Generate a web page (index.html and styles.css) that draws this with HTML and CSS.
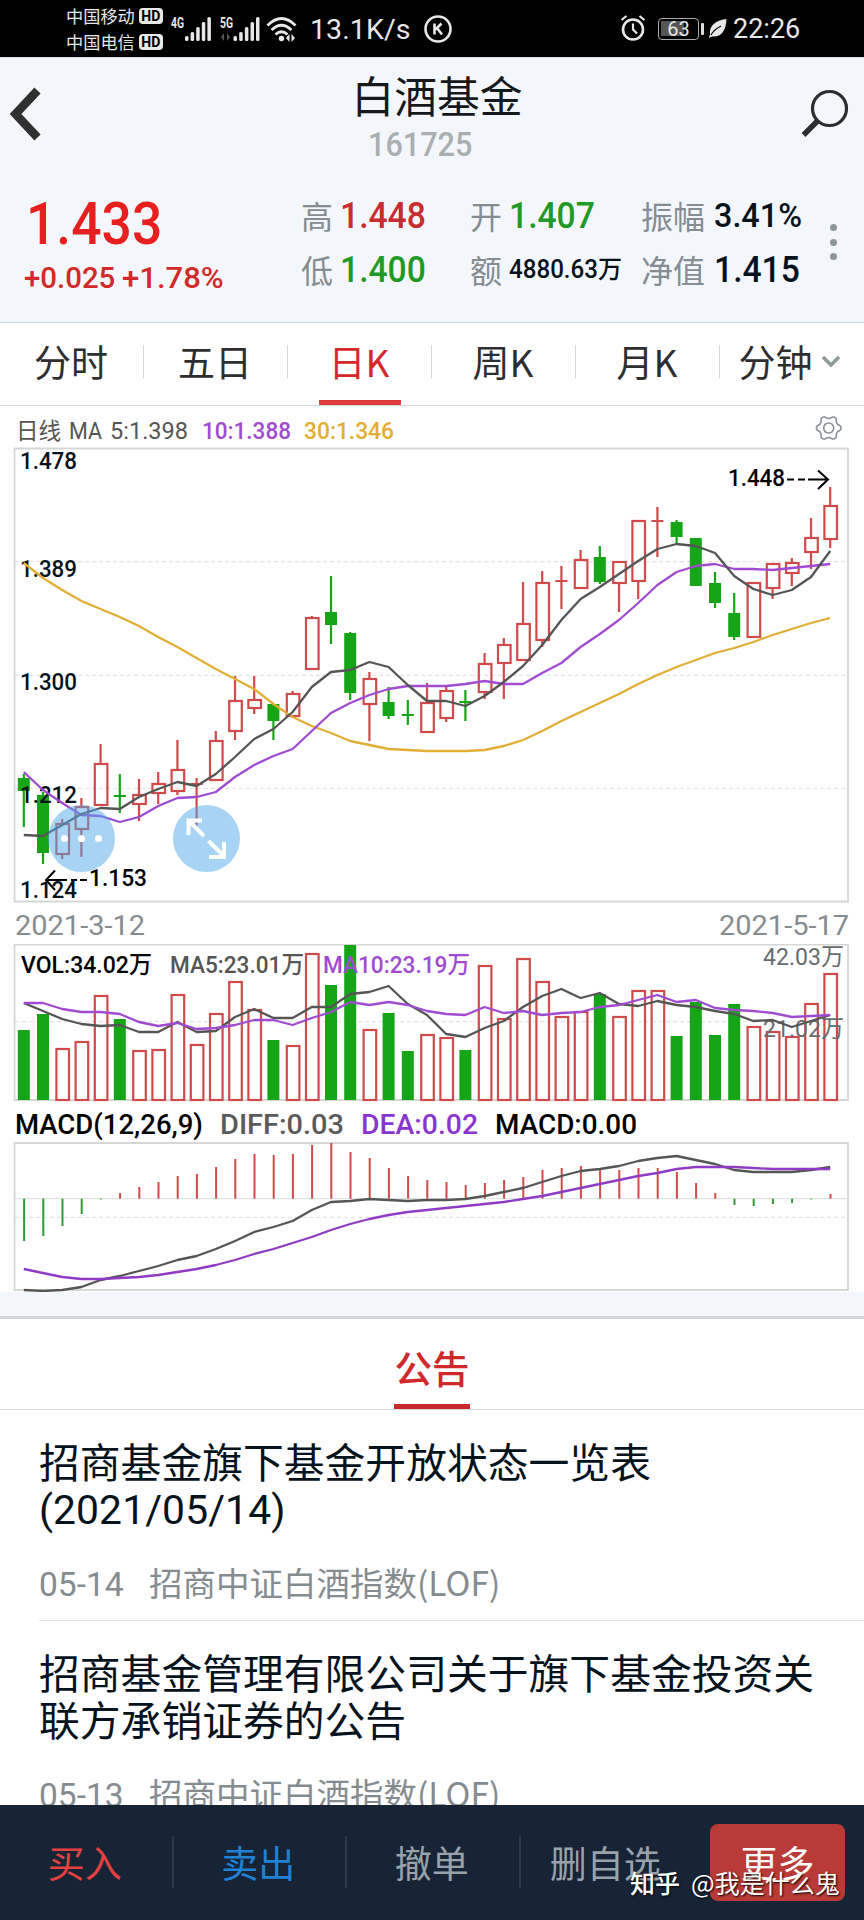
FILE: index.html
```html
<!DOCTYPE html>
<html lang="zh-CN">
<head>
<meta charset="utf-8">
<title>白酒基金 161725</title>
<link rel="stylesheet" href="styles.css">
</head>
<body>
<div class="phone">
  <div class="status">
    <div class="carriers">
      <div class="carrier">中国移动<b class="hd">HD</b></div>
      <div class="carrier">中国电信<b class="hd">HD</b></div>
    </div>
    <svg class="radio" width="130" height="57" viewBox="168 0 130 57" fill="#e8e8e8">
      <text x="171" y="28" class="gen" textLength="13" lengthAdjust="spacingAndGlyphs">4G</text>
      <rect x="185" y="36" width="3.5" height="5" rx="1.5"/><rect x="190.6" y="32" width="3.5" height="9" rx="1.5"/><rect x="196.200" y="27" width="3.500" height="14" rx="1.5"/><rect x="201.800" y="22" width="3.500" height="19" rx="1.5"/><rect x="207.400" y="17" width="3.500" height="24" rx="1.5"/>
      <text x="220" y="28" class="gen" textLength="13" lengthAdjust="spacingAndGlyphs">5G</text>
      <path d="M224 41V33l-3 4zM227 33v8l3-4z" fill="#555"/>
      <rect x="233.500" y="36" width="3.500" height="5" rx="1.5"/><rect x="239.200" y="32" width="3.500" height="9" rx="1.5"/><rect x="244.900" y="27" width="3.500" height="14" rx="1.500"/><rect x="250.500" y="22" width="3.500" height="19" rx="1.500"/><rect x="256" y="17" width="3.500" height="24" rx="1.500"/>
      <g fill="none" stroke="#e8e8e8" stroke-width="2.800"><path d="M267.500 25.500Q281.500 11.500 295.500 25.500"/><path d="M271.500 30Q281.500 20.500 291.500 30"/><path d="M275.500 34.500Q281.500 29 287.500 34.500"/></g>
      <circle cx="281.500" cy="38.500" r="2.700"/><path d="M289.500 34v8l-3.500-4zM291.500 34v8l3.500-4z"/>
    </svg>
    <span class="speed">13.1K/s</span>
    <svg class="kmark" width="28" height="28" viewBox="0 0 28 28" fill="none" stroke="#e8e8e8" stroke-width="2.600"><circle cx="14" cy="14" r="12.500"/><path d="M10.500 8.500v11M17.500 8.500l-6 6M13 13l5 6.500"/></svg>
    <svg class="alarm" width="26" height="28" viewBox="0 0 26 28" fill="none" stroke="#e8e8e8"><circle cx="13" cy="15.500" r="10" stroke-width="2.600"/><path d="M13 9.500v6l4 4" stroke-width="2.200"/><path d="M1.500 6l5-4M24.500 6l-5-4" stroke-width="2.200"/></svg>
    <span class="battery"><i class="charge"></i><span class="pct">63</span></span><i class="nub"></i>
    <svg class="leaf" width="18" height="20" viewBox="0 0 18 20"><path d="M17.500 0C8 1 0 6 1 15L0 19l3-1.500C12 18.500 17 12 17.500 0z" fill="#e8e8e8"/><path d="M2 16Q5 10.500 12 7" stroke="#000" stroke-width="1.200" fill="none"/></svg>
    <span class="clock">22:26</span>
  </div>

  <header class="head">
    <svg class="back" width="34" height="56" viewBox="0 0 34 56"><path d="M28.500 4.500L6.500 28L28.500 51.500" fill="none" stroke="#303030" stroke-width="8.500"/></svg>
    <div class="names"><h1 class="title">白酒基金</h1><div class="code">161725</div></div>
    <svg class="search" width="50" height="50" viewBox="0 0 50 50" fill="none" stroke="#2d2d2f"><circle cx="30.500" cy="20.500" r="17" stroke-width="3.200"/><path d="M19 32.500L4.500 47" stroke-width="5.500"/></svg>
  </header>

  <section class="quote">
    <div class="last">
      <div class="price">1.433</div>
      <div class="change"><span class="delta">+0.025</span><span class="rate">+1.78%</span></div>
    </div>
    <dl class="stats">
      <div class="stat"><dt>高</dt><dd class="up">1.448</dd></div>
      <div class="stat"><dt>开</dt><dd class="down">1.407</dd></div>
      <div class="stat"><dt>振幅</dt><dd class="mid">3.41%</dd></div>
      <div class="stat"><dt>低</dt><dd class="down">1.400</dd></div>
      <div class="stat"><dt>额</dt><dd class="small">4880.63万</dd></div>
      <div class="stat"><dt>净值</dt><dd>1.415</dd></div>
    </dl>
    <div class="more"><i></i><i></i><i></i></div>
  </section>

  <nav class="tabs">
    <a class="tab">分时</a><a class="tab">五日</a><a class="tab active">日K</a><a class="tab">周K</a><a class="tab">月K</a>
    <a class="tab">分钟<svg width="20" height="14" viewBox="0 0 20 14" fill="none" stroke="#8f9a98" stroke-width="3.500"><path d="M2 2l8 8l8-8"/></svg></a>
  </nav>

  <main class="charts">
    <svg id="kline" class="chart" width="864" height="538" viewBox="0 406 864 538"></svg>
    <svg id="volume" class="chart" width="864" height="158" viewBox="0 944 864 158"></svg>
    <svg id="macd" class="chart" width="864" height="190" viewBox="0 1102 864 190"></svg>
    <button class="float dots"><i></i><i></i><i></i></button>
    <button class="float expand"><svg width="67" height="67" viewBox="0 0 67 67" fill="none" stroke="#fff" stroke-width="4"><path d="M31 31L16 16M15.500 30V15.500H29M35.500 36L51 51M51 37V52H36"/></svg></button>
  </main>
  <div class="band"></div>

  <section class="news">
    <div class="newshead"><span class="newstab">公告</span></div>
    <article class="item"><h2>招商基金旗下基金开放状态一览表<br><span class="latin">(2021/05/14)</span></h2><p><span class="date">05-14</span>招商中证白酒指数(LOF)</p></article>
    <article class="item"><h2>招商基金管理有限公司关于旗下基金投资关联方承销证券的公告</h2><p><span class="date">05-13</span>招商中证白酒指数(LOF)</p></article>
  </section>

  <footer class="bar">
    <a class="act buy">买入</a><a class="act sell">卖出</a><a class="act">撤单</a><a class="act">删自选</a>
    <a class="morebtn">更多</a>
    <div class="mark"><b>知乎</b><span>@我是什么鬼</span></div>
  </footer>
</div>
<script src="charts.js"></script>
</body>
</html>
```
FILE: styles.css
```css
* { box-sizing: border-box; }
body { margin: 0; background: #fff; font-family: Roboto, "Noto Sans CJK SC", sans-serif; }
h1, h2, p, dl, dd { margin: 0; font-weight: 400; }
i { font-style: normal; display: block; }
.phone { width: 864px; height: 1920px; overflow: hidden; position: relative; display: flex; flex-direction: column; }

.status { height: 57px; flex: none; background: #000; color: #e8e8e8; display: flex; align-items: flex-start; }
.carriers { margin: 3px 0 0 66px; width: 98px; }
.carrier { height: 26px; line-height: 24px; font-size: 17.2px; display: flex; align-items: center; gap: 4px; white-space: nowrap; font-family: "Noto Sans CJK SC", sans-serif; }
.hd { width: 24px; height: 16px; border-radius: 4px; background: #e8e8e8; color: #000; font: 700 14px/16px Roboto, sans-serif; text-align: center; }
.radio { margin-left: 4px; flex: none; }
.gen { font: 700 14px Roboto, sans-serif; }
.speed { margin: 13px 0 0 12px; width: 102px; font-size: 28.5px; line-height: 34px; letter-spacing: .1px; }
.kmark { margin: 15px 0 0 12px; }
.alarm { margin: 14px 0 0 168px; }
.battery { margin: 18px 0 0 12px; width: 41px; height: 22px; border: 1.5px solid #aaa; border-radius: 4px; position: relative; flex: none; }
.charge { width: 23px; height: 15px; margin: 2px; background: #555; }
.pct { position: absolute; inset: 0; text-align: center; font-size: 20px; line-height: 20px; }
.nub { width: 3px; height: 12px; background: #ddd; margin: 23px 0 0 2px; border-radius: 1px; }
.leaf { margin: 19px 0 0 5px; }
.clock { margin: 13px 0 0 6px; font-size: 27px; line-height: 33px; }

.head { height: 113px; flex: none; background: #f3f7fb; display: flex; align-items: flex-start; justify-content: space-between; border-top: 1px solid #dfe3e6; }
.back { margin: 28px 0 0 9px; }
.names { padding-left: 32px; }
.title { font: 400 42.800px/56px "Noto Sans CJK SC", sans-serif; color: #16191c; margin-top: 8px; }
.code { font-size: 34px; line-height: 38px; color: #a9aeb1; font-weight: 500; margin: 3px 0 0 17px; transform: scaleX(.9); transform-origin: 0 50%; }
.search { margin: 30px 15px 0 0; }

.quote { height: 153px; flex: none; background: #f3f7fb; border-bottom: 1px solid #cfdae2; display: flex; }
.last { width: 301px; padding-left: 24px; font-weight: 500; }
.price { font-size: 60px; line-height: 70px; margin: 19px 0 0 2px; color: #e61f1f; transform: scaleX(.89); transform-origin: 0 0; }
.change { display: flex; font-size: 30px; line-height: 34px; color: #d22a2a; margin-top: 2px; }
.delta { width: 98px; transform: scaleX(.98); transform-origin: 0 0; }
.rate { transform: scaleX(1.035); transform-origin: 0 0; }
.stats { display: grid; grid-template-columns: 169px 171px 176px; grid-template-rows: 54px 54px; padding-top: 19px; }
.stat { display: flex; align-items: center; gap: 7px; height: 54px; color: #06121c; }
.stat:nth-child(3n) { gap: 9px; }
.stat dt { font: 400 32px/52px "Noto Sans CJK SC", sans-serif; color: #858c92; padding-bottom: 2px; }
.stat dd { font-size: 36px; font-weight: 500; line-height: 54px; transform: scaleX(.935); transform-origin: 0 50%; white-space: nowrap; }
.stat dd.mid { font-size: 33px; transform: scaleX(.98); }
.stat dd.small { font-size: 25px; transform: scaleX(.965); }
.stat .up { color: #c92c31; }
.stat .down { color: #209a24; }
.more { padding: 54px 0 0 13px; display: flex; flex-direction: column; gap: 7.500px; }
.more i { width: 7px; height: 7px; border-radius: 50%; background: #8c9599; }

.tabs { height: 83px; flex: none; display: grid; grid-template-columns: repeat(6, 144px); border-bottom: 1px solid #d2d8da; }
.tab { position: relative; font-size: 37px; line-height: 76px; text-align: center; color: #2e2e30; padding-right: 2px; font-family: "Noto Sans CJK SC", sans-serif; }
.tab + .tab::before { content: ""; position: absolute; left: -1px; top: 22px; width: 1px; height: 33px; background: #d5d7d8; }
.tab.active { color: #d5282b; }
.tab.active::after { content: ""; position: absolute; left: 31px; bottom: 0; width: 82px; height: 5px; background: #e03c3e; }
.tab:last-child { padding-right: 5px; }
.tab svg { margin-left: 8px; vertical-align: 8px; }

.charts { position: relative; height: 886px; flex: none; }
.chart { display: block; font-family: Roboto, "Noto Sans CJK SC", sans-serif; }
.float { position: absolute; width: 67px; height: 67px; border: 0; border-radius: 50%; padding: 0; background: rgba(80, 170, 235, .5); }
.dots { left: 48px; top: 399px; display: flex; justify-content: center; align-items: center; gap: 10px; }
.dots i { width: 7px; height: 7px; border-radius: 50%; background: #fff; }
.expand { left: 173px; top: 399px; }
.expand svg { display: block; }
.band { height: 27px; flex: none; background: #f3f7f9; border-bottom: 3px solid #d2d5d5; }

.news { flex: none; font-family: "Noto Sans CJK SC", sans-serif; }
.newshead { height: 91px; border-bottom: 1px solid #d8dbdb; display: flex; justify-content: center; }
.newstab { width: 76px; height: 90px; border-bottom: 5px solid #c5292b; color: #d0292c; font-size: 37.500px; font-weight: 500; line-height: 95px; text-align: center; }
.item { margin-left: 39px; height: 211px; padding-top: 27px; border-bottom: 1px solid #e3e5e6; }
.item h2 { font-size: 40.800px; line-height: 47px; color: #06121c; width: 800px; }
.latin { font-family: Roboto, sans-serif; letter-spacing: .1px; position: relative; top: -1px; }
.item p { font-size: 33.500px; line-height: 48px; margin-top: 23px; color: #858c90; }
.item + .item p { margin-top: 27px; }
.date { display: inline-block; width: 110px; font-family: Roboto, sans-serif; }

.bar { position: absolute; left: 0; bottom: 0; width: 864px; height: 115px; background: #172436; display: flex; font-family: "Noto Sans CJK SC", sans-serif; }
.act { position: relative; width: 173.500px; padding-right: 4px; font-size: 37px; line-height: 114px; text-align: center; color: #97a2ab; }
.act:not(:nth-child(4))::after { content: ""; position: absolute; right: 0; top: 31px; width: 2px; height: 52px; background: #2b394a; }
.buy { color: #e3413f; }
.sell { color: #1f82d5; }
.morebtn { margin: 19px 0 0 16px; width: 135px; height: 77px; border-radius: 8px; background: #b93a36; color: #fff; font-size: 37px; line-height: 76px; text-align: center; }
.mark { position: absolute; left: 630px; top: 58px; display: flex; gap: 11px; font-size: 25px; line-height: 38px; color: #fff; text-shadow: 1px 1px 2px #000; white-space: nowrap; }
.mark b { font-weight: 500; }
```
FILE: charts.js
```javascript
const RED = '#cf4a49', GREEN = '#16a516', DARK = '#555', PURPLE = '#a04bd2', GOLD = '#e3ae35', GRID = '#d5d7d7';
const x = i => 23.8 + 19.2 * i;
const line = (ys, color) => `<polyline fill="none" stroke="${color}" stroke-width="2.3" stroke-linejoin="round" points="${ys.map((y, i) => x(i).toFixed(1) + ',' + y).join(' ')}"/>`;
const label = (s, x0, x1, y, size, color, weight = 500) => `<text x="${x0}" y="${y}" font-size="${size}" fill="${color}" font-weight="${weight}" textLength="${x1 - x0}" lengthAdjust="spacingAndGlyphs">${s}</text>`;
const frame = (top, bottom) => `<path d="M14.500 ${top}V${bottom}H848V${top}Z" fill="none" stroke="${GRID}" stroke-width="1.800"/>`;
const rule = (y, dash) => `<path d="M15 ${y}H848" stroke="#dcdede" ${dash ? 'stroke-dasharray="4 3"' : ''}/>`;

// colour, high, body top, body bottom, low
const candles = [
  ['g',774,778,791,827],['g',792,795,853,864],['r',819,824,854,859],['r',798,807,829,857],['r',744,764,805,805],
  ['g',774,796,796,813],['r',779,795,804,821],['r',772,784,793,804],['r',740,770,791,795],['r',778,784,784,826],
  ['r',731,741,780,780],['r',676,701,731,740],['r',676,700,708,714],['g',704,704,721,740],['r',691,694,716,718],
  ['r',616,618,669,669],['g',576,612,625,644],['g',632,633,693,700],['r',672,679,704,741],['g',687,702,716,719],
  ['g',700,715,715,725],['r',683,703,732,732],['r',687,691,718,722],['g',690,702,702,721],['r',653,664,692,699],
  ['r',638,645,663,699],['r',582,624,660,660],['r',571,583,640,647],['r',566,581,581,609],['r',550,560,588,588],
  ['g',546,557,582,584],['r',562,562,583,612],['r',521,521,581,599],['r',507,521,521,557],['g',520,522,537,544],
  ['g',538,538,586,586],['g',572,583,603,608],['g',593,613,637,640],['r',583,583,637,637],['r',564,564,588,599],
  ['r',558,563,573,586],['r',518,538,552,569],['r',487,506,539,548]
];
const ma5 = [835,836,825,814,808,809,797,789,782,786,774,757,739,729,712,687,672,670,662,667,685,701,701,706,696,682,666,645,620,599,587,574,561,549,544,546,553,576,589,595,590,577,551];
const ma10 = [772,790,803,815,816,822,817,806,798,797,792,777,765,756,749,731,713,703,695,689,686,686,686,684,681,684,684,673,663,647,634,620,603,585,572,566,564,569,569,570,568,566,564];
const ma30 = [563,578,590,601,609,617,626,637,647,658,669,679,689,704,717,726,733,741,745,749,750,751,751,751,750,746,740,731,721,712,703,694,684,675,667,660,653,648,642,635,629,623,618];
const vol = [1030,1014,1049,1042,996,1019,1051,1050,995,1045,1014,982,1010,1040,1046,954,985,945,1030,1013,1051,1035,1038,1050,966,1019,959,982,1017,1012,994,1017,991,991,1036,1002,1035,1004,1027,1032,1037,1004,974];
const vma5 = [1003,1011,1019,1024,1026,1025,1032,1032,1022,1032,1031,1017,1009,1018,1018,1007,1007,994,992,986,1004,1015,1034,1037,1028,1021,1007,996,989,998,993,1004,1006,1001,1005,1007,1011,1014,1021,1020,1027,1021,1015];
const vma10 = [1003,1003,1009,1012,1012,1014,1022,1026,1023,1029,1028,1025,1020,1020,1025,1018,1012,1002,1005,1002,1005,1011,1014,1015,1007,1013,1011,1015,1013,1012,1007,1005,1000,995,1002,1000,1008,1010,1011,1013,1017,1016,1015];
const hist = [1241,1236,1226,1214,1199.5,1193,1187,1182,1176,1174,1167,1159,1154,1155,1154,1145,1143,1152,1158,1168,1176,1180,1182,1185,1183,1180,1177,1170,1168,1166,1169,1170,1168,1168,1172,1183,1193,1205,1206,1204,1203,1199.5,1194];
const diff = [1290,1291,1290,1287,1280,1276,1271,1266,1260,1256,1249,1241,1232,1227,1221,1210,1202,1201,1199,1200,1201,1200,1200,1199,1196,1192,1188,1182,1176,1171,1169,1166,1161,1158,1156,1160,1164,1170,1172,1172,1172,1170,1167];
const dea = [1269,1273,1277,1279,1279,1278,1277,1275,1272,1269,1265,1260,1254,1249,1243,1237,1230,1224,1219,1215,1212,1210,1208,1206,1204,1202,1199,1196,1192,1188,1184,1180,1176,1173,1169,1167,1167,1167,1168,1169,1169,1169,1169];

const body = (i, color, top, bottom) => color === 'g'
  ? `<rect x="${x(i) - 6}" y="${top}" width="12" height="${bottom - top}" fill="${GREEN}"/>`
  : `<rect x="${x(i) - 5.8}" y="${top}" width="12.6" height="${bottom - top}" fill="none" stroke="${RED}" stroke-width="2.2"/>`;

function candle([c, high, top, bottom, low], i) {
  const col = c === 'g' ? GREEN : RED, cx = x(i);
  if (top === bottom) return `<path d="M${cx} ${high}V${low}M${cx - 6} ${top}H${cx + 6}" stroke="${col}" stroke-width="2.2"/>`;
  return `<path d="M${cx} ${high}V${top}M${cx} ${bottom}V${low}" stroke="${col}" stroke-width="2.2"/>` + body(i, c, top, bottom);
}

function gear(cx, cy) {
  let d = '';
  for (let k = 0; k < 48; k++) {
    const a = k * Math.PI / 24, r = 10.9 + 1.4 * Math.tanh(2 * Math.cos(6 * a));
    d += (k ? 'L' : 'M') + (cx + r * Math.cos(a)).toFixed(1) + ' ' + (cy + r * Math.sin(a)).toFixed(1);
  }
  return `<g fill="none" stroke="#8c9599" stroke-width="1.700"><path d="${d}Z"/><circle cx="${cx}" cy="${cy}" r="5"/></g>`;
}

document.getElementById('kline').innerHTML =
  label('日线', 16, 61, 439, 23, DARK, 400) + label('MA', 69, 102, 438.5, 24, DARK, 400) + label('5:1.398', 110, 188, 438.5, 24.5, DARK, 400) +
  label('10:1.388', 202, 291, 438.5, 24.5, PURPLE) + label('30:1.346', 304, 394, 438.5, 24.5, GOLD) + gear(828.7, 428) +
  frame(448.5, 901.5) + rule(561.7, 1) + rule(675.3, 1) + rule(788.3, 1) +
  candles.map(candle).join('') +
  [['1.478', 469], ['1.389', 577], ['1.300', 690], ['1.212', 803], ['1.124', 898]].map(([s, y]) => label(s, 20, 77, y, 24.5, '#06121c')).join('') +
  line(ma30, GOLD) + line(ma10, PURPLE) + line(ma5, DARK) +
  label('1.153', 89, 147, 886, 24.5, '#000') + '<path d="M55 870.500L46 880L55 890M46 880H67M71 880H77M80 880H87" fill="none" stroke="#000" stroke-width="2"/>' +
  label('1.448', 728, 785, 486, 24.5, '#000') + '<path d="M787 479.500H794M798 479.500H805M808 479.500H828M818 470.500L828 479.500L818 489" fill="none" stroke="#000" stroke-width="2"/>' +
  label('2021-3-12', 15, 145, 935, 28.5, '#858d91', 400) + label('2021-5-17', 719, 849, 935, 28.5, '#858d91', 400);

document.getElementById('volume').innerHTML = frame(944.7, 1100) + rule(1021.7, 1) +
  vol.map((y, i) => body(i, candles[i][0], y, 1100)).join('') +
  label('VOL:34.02万', 21, 152, 973, 24, '#000') + label('MA5:23.01万', 170, 304, 973, 24, DARK) + label('MA10:23.19万', 323, 470, 973, 24, PURPLE) +
  label('42.03万', 763, 844, 965, 24, '#666c70', 400) + label('21.02万', 763, 844, 1037, 24, '#666c70', 400) +
  line(vma5, DARK) + line(vma10, PURPLE);

document.getElementById('macd').innerHTML =
  label('MACD(12,26,9)', 15, 203, 1134, 27.7, '#000') + label('DIFF:0.03', 220, 344, 1134, 27.7, '#5a5a5a') +
  label('DEA:0.02', 361, 478, 1134, 27.7, '#8a35cf') + label('MACD:0.00', 495, 637, 1134, 27.7, '#000') +
  frame(1143, 1290) + rule(1198.7, 0) + rule(1217.3, 1) +
  hist.map((y, i) => `<path d="M${x(i) + .3} 1198.700V${y}" stroke="${y > 1198.7 ? '#2f9a33' : RED}" stroke-width="2"/>`).join('') +
  line(diff, DARK) + line(dea, '#8f3bc4');
```
